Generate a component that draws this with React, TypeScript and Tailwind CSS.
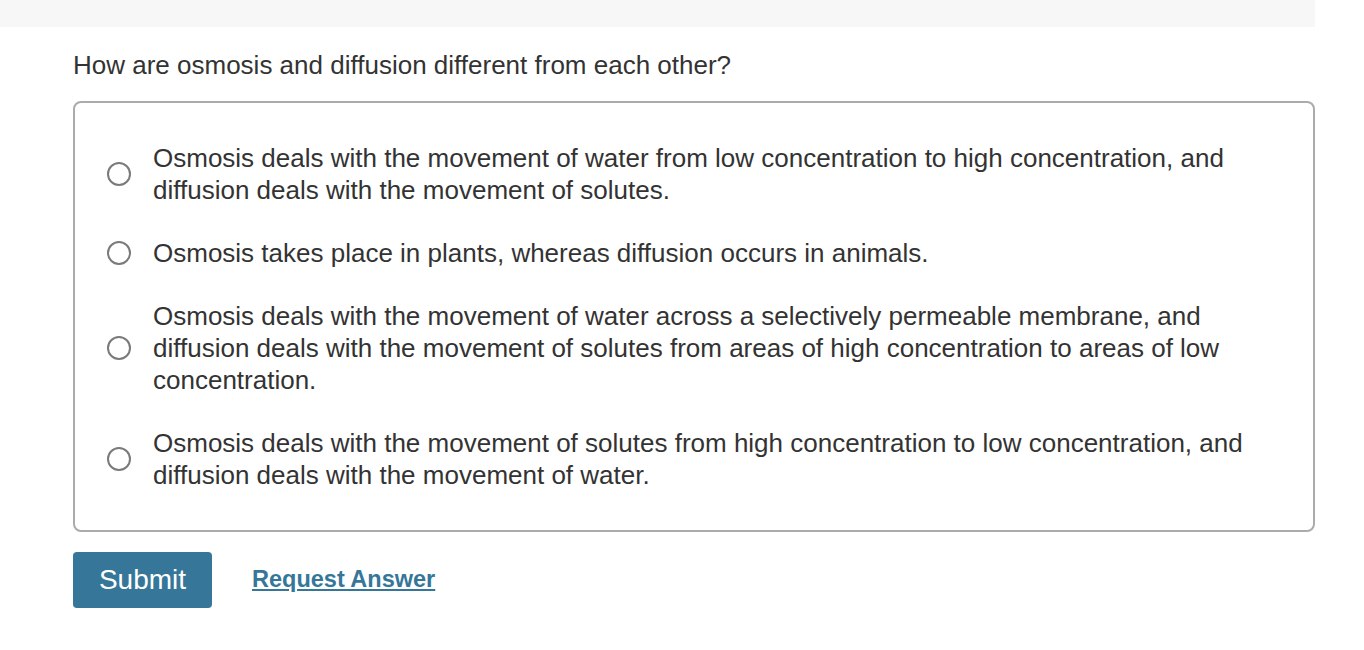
const options = [
  "Osmosis deals with the movement of water from low concentration to high concentration, and diffusion deals with the movement of solutes.",
  "Osmosis takes place in plants, whereas diffusion occurs in animals.",
  "Osmosis deals with the movement of water across a selectively permeable membrane, and diffusion deals with the movement of solutes from areas of high concentration to areas of low concentration.",
  "Osmosis deals with the movement of solutes from high concentration to low concentration, and diffusion deals with the movement of water.",
];

export default function App() {
  return (
    <div className="min-h-screen bg-white font-['Liberation_Sans',Arial,sans-serif] text-[#333]">
      <div className="w-[1315px]">
        <div className="h-[27px] bg-[#f7f7f7]" />
        <div className="pl-[73px]">
          <p className="mt-[22px] text-[26px] leading-[32px]">How are osmosis and diffusion different from each other?</p>

          <div className="mt-[20px] rounded-[8px] border-2 border-[#ababab] pl-[32px] pr-[40px] py-[39px]">
            <div className="flex flex-col gap-[31px]">
              {options.map((o, i) => (
                <label key={i} className="flex items-center gap-[22px]">
                  <span className="h-[24px] w-[24px] shrink-0 rounded-full border-2 border-[#7a7a7a] bg-white" />
                  <span className="text-[26px] leading-[32px]">{o}</span>
                </label>
              ))}
            </div>
          </div>

          <div className="mt-[20px] flex items-center gap-[40px]">
            <button className="h-[56px] w-[139px] rounded-[4px] bg-[#367799] text-[28px] text-white">Submit</button>
            <a href="#" className="text-[23.5px] font-bold text-[#367799] underline underline-offset-2">Request Answer</a>
          </div>
        </div>
      </div>
    </div>
  );
}
